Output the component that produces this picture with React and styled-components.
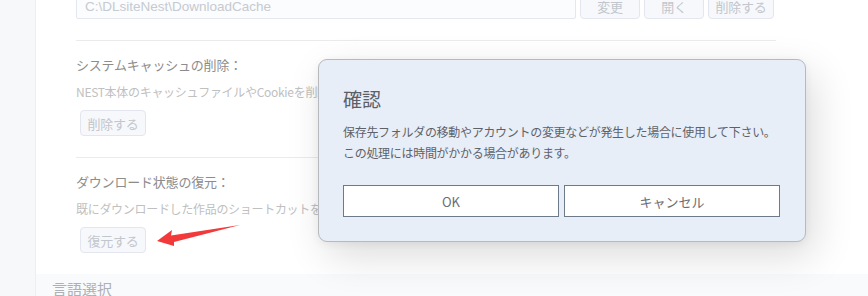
import React from "react";
import styled, { createGlobalStyle } from "styled-components";

const GlobalStyle = createGlobalStyle`
  html, body {
    margin: 0;
    padding: 0;
    background: #ffffff;
  }
  body {
    font-family: "Noto Sans CJK JP", "Noto Sans", sans-serif;
  }
`;

const App = () => {
  return (
    <>
      <GlobalStyle />
      <Page>
        <Sidebar />
        <Main>
          <Content>
            <PathRow>
              <PathInput>C:\DLsiteNest\DownloadCache</PathInput>
              <GhostButton $w={60}>変更</GhostButton>
              <GhostButton $w={60}>開く</GhostButton>
              <GhostButton $w={66}>削除する</GhostButton>
            </PathRow>
            <Divider />
            <Section>
              <Heading>システムキャッシュの削除：</Heading>
              <Desc>NEST本体のキャッシュファイルやCookieを削除します。</Desc>
              <GhostButton $w={66} $small>削除する</GhostButton>
            </Section>
            <Divider />
            <Section>
              <Heading>ダウンロード状態の復元：</Heading>
              <Desc>既にダウンロードした作品のショートカットを復元します。</Desc>
              <GhostButton $w={66} $small>復元する</GhostButton>
            </Section>
          </Content>
          <Footer>言語選択</Footer>
        </Main>

        <Arrow width="100" height="40" viewBox="0 0 100 40">
          <polygon
            points="7,21 22,10 21,15.5 90,5 24,22 24,26"
            fill="#f23a3a"
          />
        </Arrow>

        <Dialog>
          <DialogTitle>確認</DialogTitle>
          <DialogBody>
            保存先フォルダの移動やアカウントの変更などが発生した場合に使用して下さい。
            <br />
            この処理には時間がかかる場合があります。
          </DialogBody>
          <DialogActions>
            <DialogButton>OK</DialogButton>
            <DialogButton>キャンセル</DialogButton>
          </DialogActions>
        </Dialog>
      </Page>
    </>
  );
};

export default App;

const Page = styled.div`
  position: relative;
  display: grid;
  grid-template-columns: 36px 1fr;
  width: 868px;
  height: 296px;
  overflow: hidden;
`;

const Sidebar = styled.div`
  background: #f7f8fa;
  border-right: 1px solid #eceef2;
`;

const Main = styled.div`
  display: flex;
  flex-direction: column;
  min-width: 0;
`;

const Content = styled.div`
  margin-top: -6px;
  padding: 0 92px 0 40px;
`;

const PathRow = styled.div`
  display: flex;
  gap: 4px;
  height: 25px;
`;

const PathInput = styled.div`
  box-sizing: border-box;
  width: 500px;
  height: 25px;
  padding: 0 8px;
  display: flex;
  align-items: center;
  border: 1px solid #e4e7ed;
  border-radius: 2px;
  background: #fbfcfd;
  color: #c6cad1;
  font-family: "Liberation Sans", Arial, sans-serif;
  font-size: 13.5px;
`;

const GhostButton = styled.button`
  box-sizing: border-box;
  width: ${(p) => p.$w}px;
  height: ${(p) => (p.$small ? 26 : 25)}px;
  margin: ${(p) => (p.$small ? "9px 0 0 4px" : "0")};
  padding: 0;
  border: 1px solid #e3e6ee;
  border-radius: 4px;
  background: #f7f8fb;
  color: #c2c6cd;
  font-family: "Noto Sans CJK JP", sans-serif;
  font-size: 13px;
  letter-spacing: -0.3px;
  cursor: default;
`;

const Divider = styled.div`
  height: 1px;
  background: #ebebeb;
  margin-top: 21px;
`;

const Section = styled.div`
  display: flex;
  flex-direction: column;
  align-items: flex-start;
  padding-top: 14px;
`;

const Heading = styled.div`
  font-size: 13px;
  line-height: 20px;
  color: #8c8c8c;
  letter-spacing: -0.2px;
`;

const Desc = styled.div`
  margin-top: 8px;
  font-size: 12px;
  line-height: 18px;
  color: #c0c0c0;
  letter-spacing: -0.3px;
  white-space: nowrap;
`;

const Footer = styled.div`
  box-sizing: border-box;
  margin-top: auto;
  height: 22px;
  padding: 5px 0 0 16px;
  background: #f9fafc;
  color: #adb0b6;
  font-size: 15px;
  line-height: 20px;
`;

const Arrow = styled.svg`
  position: absolute;
  left: 150px;
  top: 220px;
`;

const Dialog = styled.div`
  position: absolute;
  left: 318px;
  top: 59px;
  box-sizing: border-box;
  width: 488px;
  height: 183px;
  padding: 27px 25px 24px 24px;
  background: #e7eef8;
  border: 1px solid #b6babf;
  border-radius: 9px;
  box-shadow: 8px 14px 40px rgba(0, 0, 0, 0.14), 0 2px 8px rgba(0, 0, 0, 0.06);
`;

const DialogTitle = styled.div`
  font-size: 19px;
  line-height: 24px;
  color: #5c6066;
`;

const DialogBody = styled.div`
  margin-top: 10px;
  font-size: 12px;
  line-height: 21px;
  color: #5e6268;
  letter-spacing: -0.3px;
  white-space: nowrap;
`;

const DialogActions = styled.div`
  display: grid;
  grid-template-columns: 1fr 1fr;
  gap: 5px;
  margin-top: 22px;
`;

const DialogButton = styled.button`
  box-sizing: border-box;
  height: 32px;
  padding: 0;
  border: 1px solid #6d7a8a;
  border-radius: 0;
  background: #ffffff;
  color: #6a6e74;
  font-family: "Noto Sans CJK JP", "Noto Sans", sans-serif;
  font-size: 13px;
  cursor: default;
`;
